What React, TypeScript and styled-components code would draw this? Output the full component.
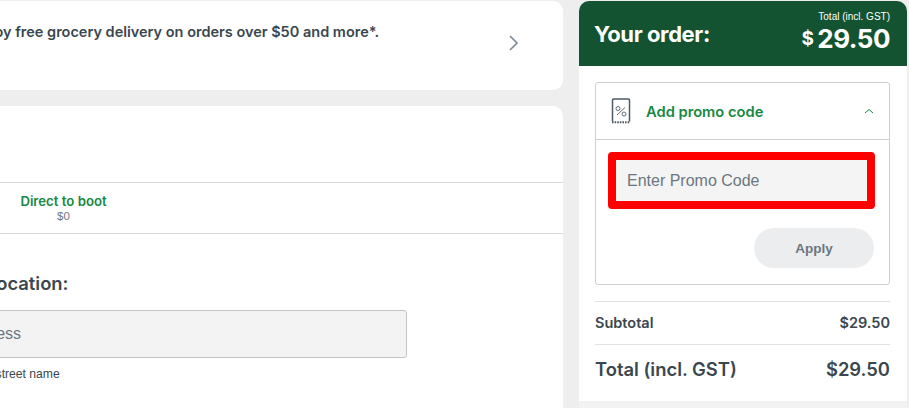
import { FC } from "react";
import styled, { createGlobalStyle } from "styled-components";

const GlobalStyle = createGlobalStyle`
  html, body {
    margin: 0;
    height: 100%;
    overflow: hidden;
    background: #eeeeee;
  }
  * {
    box-sizing: border-box;
  }
`;

const Receipt: FC = () => (
  <svg width="20" height="26" viewBox="0 0 20 26" fill="none">
    <path d="M1.5 23.5V2.2Q1.5 1 2.7 1H17.3Q18.5 1 18.5 2.2V23.5" stroke="#4d5b66" strokeWidth="1.5" />
    <path d="M1 24.2H19" stroke="#4d5b66" strokeWidth="2" strokeDasharray="1.6 1" />
    <path d="M6 17L14 9.5" stroke="#5f6c75" strokeWidth="1" />
    <circle cx="7" cy="10.5" r="2" stroke="#5f6c75" strokeWidth="1" />
    <circle cx="13" cy="16" r="2" stroke="#5f6c75" strokeWidth="1" />
  </svg>
);

const App: FC = () => (
  <>
    <GlobalStyle />
    <Page>
      <LeftColumn>
        <BannerCard>
          <BannerText>Enjoy free grocery delivery on orders over $50 and more*.</BannerText>
          <svg width="12" height="18" viewBox="0 0 12 18" fill="none">
            <path d="M3 2L10 9L3 16" stroke="#7c8b99" strokeWidth="1.7" />
          </svg>
        </BannerCard>
        <FulfilmentCard>
          <TabRow>
            <Tab>
              <TabName>Direct to boot</TabName>
              <TabPrice>$0</TabPrice>
            </Tab>
          </TabRow>
          <LocationForm>
            <LocationTitle>Enter your location:</LocationTitle>
            <AddressField>Search address</AddressField>
            <FieldHint>Enter number and street name</FieldHint>
          </LocationForm>
        </FulfilmentCard>
      </LeftColumn>
      <OrderColumn>
        <OrderHeader>
          <OrderTitle>Your order:</OrderTitle>
          <OrderTotal>
            <TotalLabel>Total (incl. GST)</TotalLabel>
            <TotalAmount>
              <Currency>$</Currency>29.50
            </TotalAmount>
          </OrderTotal>
        </OrderHeader>
        <OrderBody>
          <PromoBox>
            <PromoHeader>
              <Receipt />
              <PromoTitle>Add promo code</PromoTitle>
              <svg width="10" height="6" viewBox="0 0 10 6" fill="none">
                <path d="M1 5L5 1.5L9 5" stroke="#178841" strokeWidth="1" />
              </svg>
            </PromoHeader>
            <PromoForm>
              <PromoInput>Enter Promo Code</PromoInput>
              <ApplyButton>Apply</ApplyButton>
            </PromoForm>
          </PromoBox>
          <SubtotalRow>
            <span>Subtotal</span>
            <span>$29.50</span>
          </SubtotalRow>
          <GrandTotalRow>
            <span>Total (incl. GST)</span>
            <span>$29.50</span>
          </GrandTotalRow>
        </OrderBody>
        <FooterStrip />
      </OrderColumn>
    </Page>
  </>
);

export default App;

const Page = styled.div`
  display: grid;
  grid-template-columns: 863px 328px;
  column-gap: 16px;
  align-items: start;
  margin-left: -300px;
  padding-top: 1px;
  width: 1207px;
`;
const LeftColumn = styled.div`
  display: flex;
  flex-direction: column;
  gap: 16px;
`;
const BannerCard = styled.div`
  display: flex;
  justify-content: space-between;
  height: 89px;
  padding: 22px 44px 0 273px;
  background: #fff;
  border-radius: 10px;

  svg {
    margin-top: 11px;
  }
`;
const BannerText = styled.div`
  font: 600 14.5px/18px Inter, sans-serif;
  color: #3a474e;
`;
const FulfilmentCard = styled.div`
  height: 320px;
  padding-top: 76px;
  background: #fff;
  border-radius: 10px;
`;
const TabRow = styled.div`
  display: flex;
  height: 52px;
  padding-left: 320px;
  border-top: 1px solid #d8d8d8;
  border-bottom: 1px solid #d8d8d8;
`;
const Tab = styled.div`
  display: flex;
  flex-direction: column;
  align-items: center;
  width: 87px;
  padding-top: 10px;
`;
const TabName = styled.div`
  font: 600 13.2px/16px Inter, sans-serif;
  white-space: nowrap;
  color: #178841;
`;
const TabPrice = styled.div`
  font: 400 11.5px/14px "Liberation Sans", sans-serif;
  color: #6b7780;
`;
const LocationForm = styled.div`
  padding: 37px 0 0 195px;
`;
const LocationTitle = styled.div`
  font: 600 18.4px/24px Inter, sans-serif;
  white-space: nowrap;
  color: #3a474e;
`;
const AddressField = styled.div`
  display: flex;
  align-items: center;
  width: 512px;
  height: 48px;
  margin-top: 15px;
  padding-left: 13px;
  font: 400 16px "Liberation Sans", sans-serif;
  color: #6b7780;
  background: #f3f3f3;
  border: 1px solid #c4c4c4;
  border-radius: 3px;
`;
const FieldHint = styled.div`
  margin-top: 8px;
  font: 400 12.15px/16px "Liberation Sans", sans-serif;
  white-space: nowrap;
  color: #3a474e;
`;
const OrderColumn = styled.div`
  display: flex;
  flex-direction: column;
  height: 407px;
`;
const OrderHeader = styled.div`
  display: flex;
  align-items: flex-start;
  justify-content: space-between;
  height: 65px;
  padding: 10px 17px 0 15px;
  background: #135331;
  border-radius: 10px 10px 0 0;
  color: #fff;
`;
const OrderTitle = styled.div`
  margin-top: 8px;
  font: 700 22px/30px Inter, sans-serif;
  letter-spacing: -0.4px;
`;
const OrderTotal = styled.div`
  display: flex;
  flex-direction: column;
  align-items: flex-end;
`;
const TotalLabel = styled.div`
  font: 400 10px/12px "Liberation Sans", sans-serif;
`;
const TotalAmount = styled.div`
  display: flex;
  align-items: center;
  font: 700 26px/32px Inter, sans-serif;
  letter-spacing: -0.5px;
`;
const Currency = styled.span`
  margin-right: 4px;
  font-size: 19px;
`;
const OrderBody = styled.div`
  flex: 1;
  padding: 16px 17px 0 16px;
  background: #fff;
`;
const PromoBox = styled.div`
  height: 203px;
  border: 1px solid #cfcfcf;
  border-radius: 3px;
`;
const PromoHeader = styled.div`
  display: flex;
  align-items: center;
  height: 57px;
  padding: 0 15px;
  border-bottom: 1px solid #cfcfcf;
`;
const PromoTitle = styled.div`
  flex: 1;
  margin: 1px 0 0 15px;
  font: 600 14.7px/20px Inter, sans-serif;
  color: #178841;
`;
const PromoForm = styled.div`
  display: flex;
  flex-direction: column;
  align-items: flex-end;
  padding: 12px 15px 0 12px;
`;
const PromoInput = styled.div`
  display: flex;
  align-items: center;
  align-self: stretch;
  height: 57px;
  margin-right: -1px;
  padding-left: 11px;
  font: 400 16px "Liberation Sans", sans-serif;
  color: #6b7780;
  background: #f4f4f4;
  border: 8px solid #ff0000;
  border-radius: 4px;
`;
const ApplyButton = styled.div`
  display: flex;
  align-items: center;
  justify-content: center;
  width: 120px;
  height: 40px;
  margin-top: 19px;
  font: 700 13.5px "Liberation Sans", sans-serif;
  color: #6b7780;
  background: #ebedef;
  border-radius: 20px;
`;
const SubtotalRow = styled.div`
  display: flex;
  justify-content: space-between;
  align-items: center;
  height: 44px;
  margin-top: 16px;
  padding-bottom: 2px;
  font: 600 14.5px Inter, sans-serif;
  color: #3a474e;
  border-top: 1px solid #e2e2e2;
  border-bottom: 1px solid #e2e2e2;
`;
const GrandTotalRow = styled.div`
  display: flex;
  justify-content: space-between;
  align-items: center;
  height: 50px;
  padding-bottom: 2px;
  font: 600 18.4px Inter, sans-serif;
  color: #3a474e;
`;
const FooterStrip = styled.div`
  height: 7px;
  background: #f2f2f2;
`;
